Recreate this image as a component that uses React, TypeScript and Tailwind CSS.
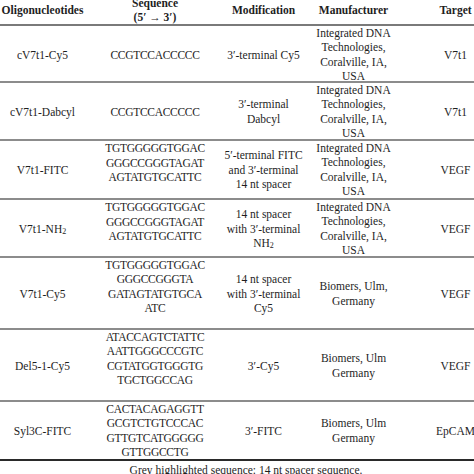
import type { ReactNode } from "react";

type Row = {
  name: ReactNode;
  seq: string[];
  seqPad?: boolean;
  mod: ReactNode[];
  maker: string[];
  target: string;
  h: string;
};

const IDT = ["Integrated DNA", "Technologies,", "Coralville, IA,", "USA"];
const V7 = ["TGTGGGGGTGGAC", "GGGCCGGGTAGAT", "AGTATGTGCATTC"];
const NH2 = (
  <>
    NH<sub className="text-[8px] align-baseline relative top-[1px]">2</sub>
  </>
);

const rows: Row[] = [
  { name: "cV7t1-Cy5", seq: ["CCGTCCACCCCC"], mod: ["3′-terminal Cy5"], maker: IDT, target: "V7t1", h: "h-[57px]" },
  { name: "cV7t1-Dabcyl", seq: ["CCGTCCACCCCC"], mod: ["3′-terminal", "Dabcyl"], maker: IDT, target: "V7t1", h: "h-[58px]" },
  { name: "V7t1-FITC", seq: V7, seqPad: true, mod: ["5′-terminal FITC", "and 3′-terminal", "14 nt spacer"], maker: IDT, target: "VEGF", h: "h-[59px]" },
  { name: <>V7t1-{NH2}</>, seq: V7, seqPad: true, mod: ["14 nt spacer", "with 3′-terminal", NH2], maker: IDT, target: "VEGF", h: "h-[58px]" },
  {
    name: "V7t1-Cy5",
    seq: ["TGTGGGGGTGGAC", "GGGCCGGGTA", "GATAGTATGTGCA", "ATC"],
    seqPad: true,
    mod: ["14 nt spacer", "with 3′-terminal", "Cy5"],
    maker: ["Biomers, Ulm,", "Germany"],
    target: "VEGF",
    h: "h-[72px]",
  },
  {
    name: "Del5-1-Cy5",
    seq: ["ATACCAGTCTATTC", "AATTGGGCCCGTC", "CGTATGGTGGGTG", "TGCTGGCCAG"],
    seqPad: true,
    mod: ["3′-Cy5"],
    maker: ["Biomers, Ulm", "Germany"],
    target: "VEGF",
    h: "h-[72px]",
  },
  {
    name: "Syl3C-FITC",
    seq: ["CACTACAGAGGTT", "GCGTCTGTCCCAC", "GTTGTCATGGGGG", "GTTGGCCTG"],
    mod: ["3′-FITC"],
    maker: ["Biomers, Ulm", "Germany"],
    target: "EpCAM",
    h: "h-[59px]",
  },
];

const grid = "grid grid-cols-[85px_140px_77px_103px_101px] items-center text-center";

function Lines({ items, className = "" }: { items: ReactNode[]; className?: string }) {
  return (
    <div className={`flex flex-col items-center whitespace-nowrap ${className}`}>
      {items.map((t, i) => (
        <span key={i}>{t}</span>
      ))}
    </div>
  );
}

export default function App() {
  return (
    <div className="w-[474px] h-[474px] overflow-hidden bg-white text-[#1e1e1e] font-['Liberation_Serif','Times_New_Roman',serif] text-[11.5px] leading-[14.4px]">
      <div className="w-[506px] -mt-[4px]">
        <div className={`${grid} h-[30px] border-b-2 border-[#7a7a7a] font-bold`}>
          <span className="whitespace-nowrap">Oligonucleotides</span>
          <Lines items={["Sequence", "(5′ → 3′)"]} />
          <span>Modification</span>
          <span>Manufacturer</span>
          <span>Target</span>
        </div>

        {rows.map((r, i) => (
          <div
            key={i}
            className={`${grid} ${r.h} border-b-2 ${i === rows.length - 1 ? "border-[#2a2a2a]" : "border-[#8c8c8c]"}`}
          >
            <span className="whitespace-nowrap">{r.name}</span>
            <Lines items={r.seq} className={`tracking-[-0.3px] ${r.seqPad ? "pb-[14px]" : ""}`} />
            <Lines items={r.mod} />
            <Lines items={r.maker} />
            <span>{r.target}</span>
          </div>
        ))}
      </div>

      <p className="w-[474px] pt-[2px] pl-[18px] text-center whitespace-nowrap">
        Grey highlighted sequence: 14 nt spacer sequence.
      </p>
    </div>
  );
}
